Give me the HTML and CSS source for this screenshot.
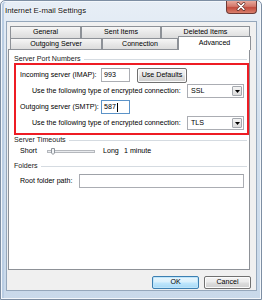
FILE: index.html
```html
<!DOCTYPE html>
<html>
<head>
<meta charset="utf-8">
<link rel="stylesheet" href="styles.css">
</head>
<body>
<div class="window">
  <div class="titlebar">
    <span class="title">Internet E-mail Settings</span>
    <div class="close">
      <svg width="31" height="13" viewBox="0 0 31 13">
        <path d="M12.5 3.5 L18.5 9.5 M18.5 3.5 L12.5 9.5" stroke="#5a2520" stroke-width="3" stroke-linecap="round"/>
        <path d="M12.5 3.5 L18.5 9.5 M18.5 3.5 L12.5 9.5" stroke="#ffffff" stroke-width="1.6" stroke-linecap="round"/>
      </svg>
    </div>
  </div>
  <div class="client">
    <div class="tabs">
      <div class="tabrow back">
        <div class="tab t-general">General</div>
        <div class="tab t-sent">Sent Items</div>
        <div class="tab t-deleted">Deleted Items</div>
      </div>
      <div class="tabrow front">
        <div class="tab t-outgoing">Outgoing Server</div>
        <div class="tab t-connection">Connection</div>
        <div class="tab active t-advanced">Advanced</div>
      </div>
    </div>
    <div class="panel">
      <div class="group-head first"><span>Server Port Numbers</span><i class="rule"></i></div>
      <div class="highlight">
        <div class="row">
          <span class="lbl lbl-server">Incoming server (IMAP):</span>
          <span class="field port">993</span>
          <span class="btn defaults">Use Defaults</span>
        </div>
        <div class="row">
          <span class="lbl lbl-enc">Use the following type of encrypted connection:</span>
          <span class="select"><span class="val">SSL</span><span class="arrow"><svg width="5" height="3" viewBox="0 0 5 3"><path d="M0 0 H5 L2.5 3 Z" fill="#000"/></svg></span></span>
        </div>
        <div class="row">
          <span class="lbl lbl-server">Outgoing server (SMTP):</span>
          <span class="field port focused">587<i class="caret"></i></span>
        </div>
        <div class="row">
          <span class="lbl lbl-enc">Use the following type of encrypted connection:</span>
          <span class="select"><span class="val">TLS</span><span class="arrow"><svg width="5" height="3" viewBox="0 0 5 3"><path d="M0 0 H5 L2.5 3 Z" fill="#000"/></svg></span></span>
        </div>
      </div>
      <div class="group-head"><span>Server Timeouts</span><i class="rule"></i></div>
      <div class="slider-row">
        <span class="short">Short</span>
        <svg class="slider" width="48" height="9" viewBox="0 0 48 9">
          <rect x="0.5" y="3.5" width="47" height="2" fill="#e9ebee" stroke="#b5b8bd"/>
          <path d="M4.5 1.5 H7.5 V6 L6 7.5 L4.5 6 Z" fill="#f4f6f8" stroke="#8e949b"/>
        </svg>
        <span class="long">Long</span>
        <span class="minute">1 minute</span>
      </div>
      <div class="group-head"><span>Folders</span><i class="rule"></i></div>
      <div class="row root-row">
        <span class="lbl lbl-root">Root folder path:</span>
        <span class="field root"></span>
      </div>
    </div>
    <div class="footer">
      <span class="btn dlg ok">OK</span>
      <span class="btn dlg">Cancel</span>
    </div>
  </div>
</div>
</body>
</html>
```

FILE: styles.css
```css
html, body {
  margin: 0;
  padding: 0;
}

body {
  width: 262px;
  height: 300px;
  overflow: hidden;
  background: #ffffff;
  font-family: "Liberation Sans", Arial, sans-serif;
  font-size: 7.1px;
  color: #000;
}

.window {
  box-sizing: border-box;
  width: 262px;
  height: 300px;
  border: 1px solid #7d8ea3;
  border-radius: 5px 5px 0 0;
  background: linear-gradient(#e7eef6, #d3e0ee 40%, #c9d9ea);
  padding: 0 4px 8px 5px;
  display: flex;
  flex-direction: column;
  box-shadow: inset 0 0 0 1px #f3f7fb, inset 2px 0 0 1px #b9cde3;
}

.titlebar {
  height: 20px;
  display: flex;
  align-items: flex-start;
  flex: none;
}

.title {
  font-size: 7.8px;
  line-height: 20px;
  margin-left: -1px;
  color: #111;
  text-shadow: 0 0 3px #ffffff, 0 0 2px #ffffff;
}

.close {
  margin-left: auto;
  width: 31px;
  height: 13px;
  box-sizing: border-box;
  border: 1px solid #6d3a36;
  border-top: none;
  border-radius: 0 0 4px 4px;
  background: linear-gradient(#e9a99c, #d2776a 45%, #c24b3d 55%, #d9806d);
  display: flex;
}

.close svg {
  margin: -1px 0 0 -1px;
}

.client {
  flex: 1;
  box-sizing: border-box;
  border: 1px solid #95a7bb;
  background: #f0f0f0;
  padding: 4px 5px 0 2px;
  display: flex;
  flex-direction: column;
}

/* tabs */
.tabs {
  margin-left: 1px;
  display: flex;
  flex-direction: column;
}

.tabrow {
  display: flex;
}

.tab {
  box-sizing: border-box;
  border: 1px solid #8d9197;
  border-bottom: none;
  background: linear-gradient(#f6f6f6, #e8e8e8 50%, #dcdcdc);
  text-align: center;
  flex: none;
}

.back .tab {
  height: 12px;
  line-height: 11px;
}

.front .tab {
  height: 11px;
  line-height: 10px;
}

.t-general { width: 71px; }
.t-sent { width: 80px; }
.t-deleted { width: 89px; }
.t-outgoing { width: 92px; }
.t-connection { width: 76px; }

.front .tab.active {
  width: 73px;
  height: 14px;
  line-height: 13px;
  margin-top: -2px;
  margin-bottom: -1px;
  background: #ffffff;
  position: relative;
  z-index: 1;
}

/* panel */
.panel {
  box-sizing: border-box;
  width: 242px;
  height: 221px;
  margin-left: -1px;
  border: 1px solid #8d9197;
  background: #ffffff;
  padding: 5px 0 0 5px;
  flex: none;
}

.group-head {
  display: flex;
  align-items: center;
  height: 10px;
  line-height: 10px;
  margin-right: 2px;
}

.group-head.first {
  height: 8px;
  line-height: 8px;
}

.group-head span {
  color: #1a1a1a;
}

.rule {
  flex: 1;
  height: 1px;
  margin-left: 3px;
  background: #d5dbe1;
}

.highlight {
  box-sizing: border-box;
  height: 72px;
  border: 2px solid #ee1c24;
  padding: 2px 0 2px 4px;
}

.row {
  display: flex;
  align-items: center;
  height: 16px;
  line-height: 14px;
}

.lbl {
  flex: none;
}

.lbl-server { width: 81px; }

.lbl-enc {
  width: 155px;
  margin-left: 12px;
}

.field {
  box-sizing: border-box;
  height: 14px;
  border: 1px solid #abadb3;
  border-top-color: #9fa2a8;
  background: #ffffff;
  padding-left: 2px;
  line-height: 12px;
  display: flex;
  align-items: center;
}

.port { width: 29px; }

.focused {
  border-color: #5c93c8;
}

.caret {
  width: 1px;
  height: 9px;
  background: #000;
  margin-left: 1px;
}

.btn {
  box-sizing: border-box;
  border: 1px solid #707070;
  border-radius: 2px;
  background: linear-gradient(#f4f4f4, #ebebeb 45%, #dddddd 55%, #cfcfcf);
  text-align: center;
  box-shadow: inset 0 0 0 1px #fbfbfb;
}

.defaults {
  width: 50px;
  height: 15px;
  line-height: 13px;
  margin-left: 7px;
}

.select {
  box-sizing: border-box;
  width: 57px;
  height: 14px;
  border: 1px solid #abadb3;
  background: #ffffff;
  display: flex;
  align-items: center;
  padding: 0 1px 0 3px;
}

.select .val {
  flex: 1;
  line-height: 12px;
}

.arrow {
  box-sizing: border-box;
  width: 10px;
  height: 10px;
  border: 1px solid #a5a9af;
  border-radius: 1px;
  background: linear-gradient(#f4f4f4, #dcdcdc);
  display: flex;
  align-items: center;
  justify-content: center;
}

.slider-row {
  display: flex;
  align-items: center;
  height: 13px;
  line-height: 13px;
  padding-left: 6px;
  margin-bottom: 3px;
}

.short { width: 27px; }

.slider {
  display: block;
  flex: none;
}

.long {
  width: 21px;
  margin-left: 8px;
}

.root-row {
  margin-top: 2px;
  padding-left: 6px;
}

.lbl-root { width: 59px; }

.root {
  width: 165px;
}

/* footer */
.footer {
  display: flex;
  justify-content: flex-end;
  gap: 5px;
  margin-top: 6px;
}

.dlg {
  width: 47px;
  height: 13px;
  line-height: 11px;
}

.ok {
  border-color: #3c7fb1;
  box-shadow: inset 0 0 0 1px #bfe5fb;
  background: linear-gradient(#eaf6fd, #d9f0fc 45%, #bee6fd 55%, #a7d9f5);
}
```
